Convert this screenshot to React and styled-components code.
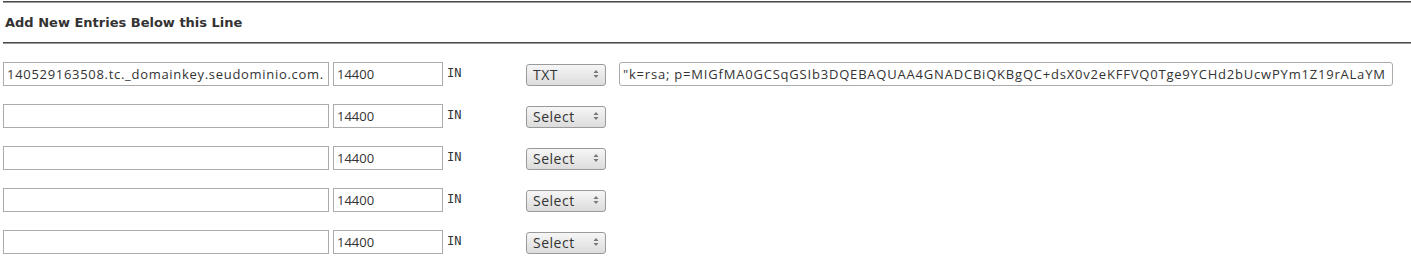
import React from "react";
import styled, { createGlobalStyle } from "styled-components";

const GlobalStyle = createGlobalStyle`
  body {
    margin: 0;
    background: #fff;
    font-family: "Open Sans", "DejaVu Sans", sans-serif;
    color: #333;
  }
`;

const Page = styled.div`
  padding: 1px 0 0 3px;
`;

const Rule = styled.hr`
  margin: 0;
  height: 0;
  border: none;
  border-top: 1px solid #4a4a4a;
  border-bottom: 1px solid #9a9a9a;
`;

const Heading = styled.h4`
  margin: 0;
  padding: 12px 0 0 2px;
  box-sizing: border-box;
  height: 39px;
  font-family: "DejaVu Sans", Verdana, sans-serif;
  font-size: 13px;
  font-weight: bold;
  color: #333;
`;

const Rows = styled.div`
  padding-top: 18px;
`;

const Row = styled.div`
  display: grid;
  grid-template-columns: 330px 114px 79px 93px 1fr;
  align-items: start;
  height: 42px;
`;

const TextInput = styled.input`
  box-sizing: border-box;
  width: ${(p) => p.$w}px;
  height: 24px;
  padding: 0 3px;
  border: 1px solid #ababab;
  border-radius: ${(p) => (p.$round ? "3px" : "0")};
  font-family: "Open Sans", "DejaVu Sans", sans-serif;
  font-size: 13px;
  letter-spacing: ${(p) => p.$spacing || 0}px;
  color: #333;
  background: #fff;
  outline: none;
`;

const Label = styled.span`
  padding-top: 4px;
  font-family: "DejaVu Sans Mono", "Liberation Mono", monospace;
  font-size: 12px;
  color: #333;
`;

const SelectWrap = styled.div`
  position: relative;
  width: 80px;
  height: 22px;
  margin-top: 1px;
`;

const Select = styled.select`
  appearance: none;
  box-sizing: border-box;
  width: 80px;
  height: 22px;
  padding: 0 0 0 6px;
  border: 1px solid #9a9a9a;
  border-radius: 3px;
  background: linear-gradient(#f6f6f6, #dcdcdc);
  font-family: "Open Sans", "DejaVu Sans", sans-serif;
  font-size: 14px;
  letter-spacing: 0.5px;
  color: #333;
  outline: none;
`;

const Arrows = styled.svg`
  position: absolute;
  right: 7px;
  top: 6px;
  pointer-events: none;
`;

function TypeSelect({ value }) {
  return (
    <SelectWrap>
      <Select value={value} onChange={() => {}}>
        <option value="">Select</option>
        <option value="A">A</option>
        <option value="CNAME">CNAME</option>
        <option value="MX">MX</option>
        <option value="TXT">TXT</option>
      </Select>
      <Arrows width="6" height="10" viewBox="0 0 6 10">
        <path d="M3 1 L5.5 4 H0.5 Z" fill="#777" />
        <path d="M3 9 L5.5 6 H0.5 Z" fill="#777" />
      </Arrows>
    </SelectWrap>
  );
}

const entries = [
  {
    name: "140529163508.tc._domainkey.seudominio.com.",
    type: "TXT",
    data: "\"k=rsa; p=MIGfMA0GCSqGSIb3DQEBAQUAA4GNADCBiQKBgQC+dsX0v2eKFFVQ0Tge9YCHd2bUcwPYm1Z19rALaYM",
  },
  { name: "", type: "" },
  { name: "", type: "" },
  { name: "", type: "" },
  { name: "", type: "" },
];

export default function App() {
  return (
    <Page>
      <GlobalStyle />
      <Rule />
      <Heading>Add New Entries Below this Line</Heading>
      <Rule />
      <Rows>
        {entries.map((e, i) => (
          <Row key={i}>
            <TextInput $w={326} $spacing={0.7} defaultValue={e.name} />
            <TextInput $w={110} defaultValue="14400" />
            <Label>IN</Label>
            <TypeSelect value={e.type} />
            {e.data ? (
              <TextInput $w={774} $round $spacing={0.8} defaultValue={e.data} />
            ) : (
              <span />
            )}
          </Row>
        ))}
      </Rows>
    </Page>
  );
}
